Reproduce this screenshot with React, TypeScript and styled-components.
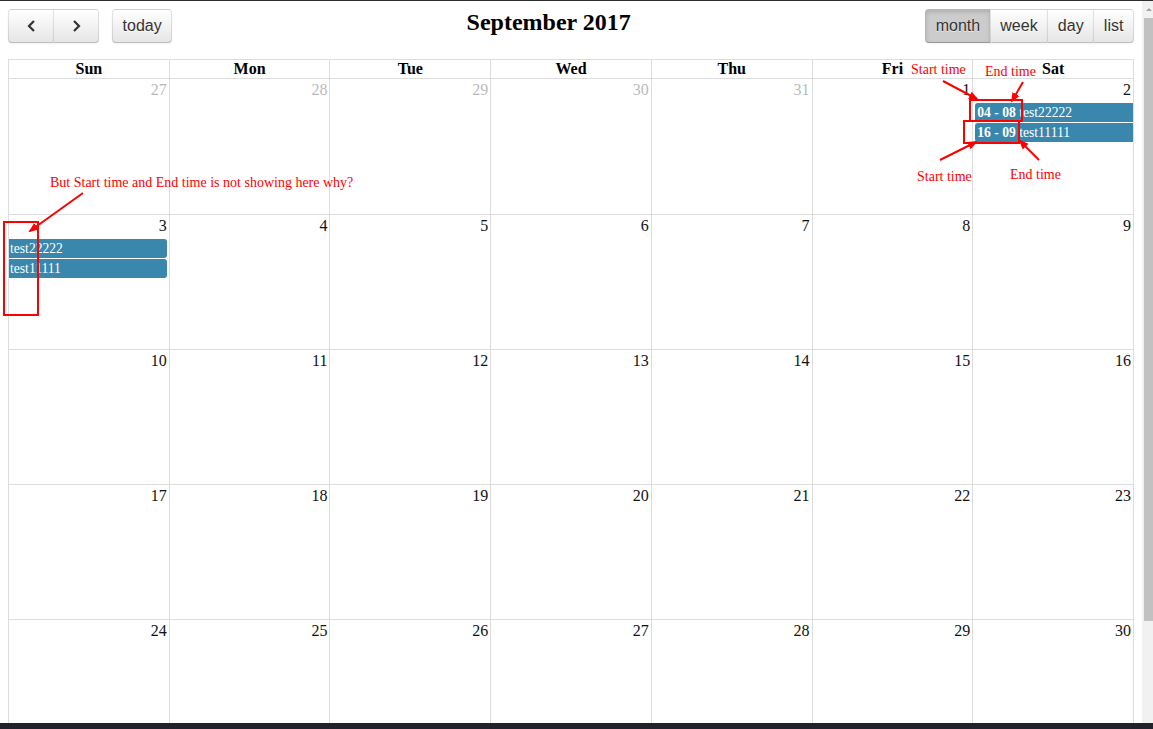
import React from 'react'
import styled, { createGlobalStyle, css } from 'styled-components'

const GlobalStyle = createGlobalStyle`
  html, body {
    margin: 0;
    padding: 0;
    height: 100%;
    overflow: hidden;
    background: #fff;
  }
  body {
    font-family: "Liberation Serif", "Times New Roman", serif;
    color: #000;
  }
  * {
    box-sizing: border-box;
  }
`

const Window = styled.div`
  position: relative;
  display: flex;
  flex-direction: column;
  width: 100vw;
  height: 100vh;
`

const TopEdge = styled.div`
  flex: none;
  height: 1px;
  background: #2e2e2e;
`

const Viewport = styled.div`
  flex: 1;
  display: flex;
  min-height: 0;
`

const Page = styled.div`
  flex: 1;
  min-width: 0;
  padding: 8px 8px 0;
  overflow: hidden;
`

const Scrollbar = styled.div`
  flex: none;
  width: 11px;
  background: #f1f1f1;
  display: flex;
  flex-direction: column;
  align-items: flex-end;
`

const ScrollArrow = styled.div`
  width: 9px;
  height: 17px;
  display: flex;
  align-items: center;
  justify-content: center;
  &::after {
    content: '';
    border-left: 3px solid transparent;
    border-right: 3px solid transparent;
    border-bottom: 3px solid #a3a3a3;
  }
`

const ScrollThumb = styled.div`
  width: 9px;
  height: 603px;
  background: #c1c1c1;
`

const BottomBar = styled.div`
  flex: none;
  height: 6px;
  background: #202428;
`

/* toolbar */

const Toolbar = styled.div`
  display: flex;
  align-items: flex-start;
  margin-bottom: 16px;
`

const ToolbarSide = styled.div`
  display: flex;
  gap: 13px;
`

const ToolbarCenter = styled.div`
  flex: 1;
  text-align: center;
`

const Title = styled.h2`
  margin: 0;
  font-size: 24px;
  font-weight: bold;
`

const ButtonGroup = styled.div`
  display: flex;
  & > button + button {
    margin-left: -1px;
  }
  & > button:not(:first-child) {
    border-top-left-radius: 0;
    border-bottom-left-radius: 0;
  }
  & > button:not(:last-child) {
    border-top-right-radius: 0;
    border-bottom-right-radius: 0;
  }
`

const Button = styled.button<{ $active?: boolean; $icon?: boolean }>`
  height: 33.6px;
  padding: 0 9.6px;
  display: flex;
  align-items: center;
  justify-content: center;
  font-family: "Liberation Sans", Arial, sans-serif;
  font-size: 16px;
  color: #333;
  text-shadow: 0 1px 1px rgba(255, 255, 255, 0.75);
  background-color: #f5f5f5;
  background-image: linear-gradient(to bottom, #fff, #e6e6e6);
  border: 1px solid;
  border-color: rgba(0, 0, 0, 0.1) rgba(0, 0, 0, 0.1) rgba(0, 0, 0, 0.25);
  border-radius: 4px;
  box-shadow: inset 0 1px 0 rgba(255, 255, 255, 0.2), 0 1px 2px rgba(0, 0, 0, 0.05);
  cursor: pointer;
  ${(p) =>
    p.$icon &&
    css`
      width: 46px;
      padding: 0;
    `}
  ${(p) =>
    p.$active &&
    css`
      background-color: #ccc;
      background-image: none;
      box-shadow: inset 0 2px 4px rgba(0, 0, 0, 0.15), 0 1px 2px rgba(0, 0, 0, 0.05);
    `}
`

function Chevron({ dir }: { dir: 'left' | 'right' }) {
  const points = dir === 'left' ? '7,1 2,6 7,11' : '2,1 7,6 2,11'
  return (
    <svg width="9" height="12" viewBox="0 0 9 12">
      <polyline points={points} fill="none" stroke="#333" strokeWidth="2.2" />
    </svg>
  )
}

/* month grid */

const Calendar = styled.div`
  border-left: 1px solid #ddd;
`

const HeadRow = styled.div`
  display: grid;
  grid-template-columns: repeat(7, 1fr);
  border-top: 1px solid #ddd;
  border-bottom: 1px solid #ddd;
`

const HeadCell = styled.div`
  border-right: 1px solid #ddd;
  text-align: center;
  font-weight: bold;
  font-size: 16px;
  line-height: 18px;
`

const Weeks = styled.div``

const WeekRow = styled.div`
  display: grid;
  grid-template-columns: repeat(7, 1fr);
  height: 135px;
  border-bottom: 1px solid #ddd;
  &:first-child {
    height: 136px;
  }
`

const DayCell = styled.div`
  min-width: 0;
  border-right: 1px solid #ddd;
`

const DayNumber = styled.div<{ $other?: boolean }>`
  height: 23px;
  padding: 2px 2px 0;
  text-align: right;
  font-size: 16px;
  line-height: 18px;
  color: #111;
  opacity: ${(p) => (p.$other ? 0.3 : 1)};
`

const Event = styled.div<{ $notStart?: boolean; $notEnd?: boolean }>`
  margin: 1px 2px 0;
  padding: 0 1px;
  background: #3a87ad;
  border: 1px solid #3a87ad;
  border-radius: 3px;
  color: #fff;
  font-size: 13.6px;
  line-height: 17px;
  white-space: nowrap;
  overflow: hidden;
  ${(p) =>
    p.$notStart &&
    css`
      margin-left: 0;
      border-left-width: 0;
      border-top-left-radius: 0;
      border-bottom-left-radius: 0;
    `}
  ${(p) =>
    p.$notEnd &&
    css`
      margin-right: 0;
      border-right-width: 0;
      border-top-right-radius: 0;
      border-bottom-right-radius: 0;
    `}
`

const EventTime = styled.span`
  font-weight: bold;
`

/* annotations drawn over the screenshot */

const Overlay = styled.svg`
  position: absolute;
  top: 0;
  left: 0;
  pointer-events: none;
`

const NoteText = styled.text`
  font-family: "Liberation Serif", "Times New Roman", serif;
  font-size: 14px;
  fill: #ff0000;
`

type CalEvent = { time?: string; title: string; notStart?: boolean; notEnd?: boolean }
type Day = { n: number; other?: boolean; events?: CalEvent[] }

const dayNames = ['Sun', 'Mon', 'Tue', 'Wed', 'Thu', 'Fri', 'Sat']

function buildWeeks(): Day[][] {
  const days: Day[] = [27, 28, 29, 30, 31].map((n) => ({ n, other: true }))
  for (let n = 1; n <= 30; n++) days.push({ n })
  days[6].events = [
    { time: '04 - 08', title: 'test22222', notEnd: true },
    { time: '16 - 09', title: 'test11111', notEnd: true },
  ]
  days[7].events = [
    { title: 'test22222', notStart: true },
    { title: 'test11111', notStart: true },
  ]
  const weeks: Day[][] = []
  for (let i = 0; i < days.length; i += 7) weeks.push(days.slice(i, i + 7))
  return weeks
}

const notes = [
  { x: 911, y: 74, text: 'Start time' },
  { x: 985, y: 76, text: 'End time' },
  { x: 917, y: 181, text: 'Start time' },
  { x: 1010, y: 179, text: 'End time' },
  { x: 50, y: 187, text: 'But Start time and End time is not showing here why?' },
]

const arrows = [
  [943, 81, 977, 99],
  [1023, 82, 1012, 101],
  [940, 160, 976, 142],
  [1039, 160, 1020, 141],
  [83, 193, 30, 231],
]

const boxes = [
  [970, 100, 52, 21],
  [964, 121, 55, 22],
  [4, 222, 34, 93],
]

function Annotations() {
  return (
    <Overlay width="1153" height="729" viewBox="0 0 1153 729">
      <defs>
        <marker
          id="head"
          markerUnits="userSpaceOnUse"
          markerWidth="10"
          markerHeight="10"
          refX="8"
          refY="5"
          orient="auto"
        >
          <path d="M0,1 L10,5 L0,9 Z" fill="#ff0000" />
        </marker>
      </defs>
      {boxes.map(([x, y, w, h], i) => (
        <rect key={i} x={x} y={y} width={w} height={h} fill="none" stroke="#ff0000" strokeWidth="2" />
      ))}
      {arrows.map(([x1, y1, x2, y2], i) => (
        <line
          key={i}
          x1={x1}
          y1={y1}
          x2={x2}
          y2={y2}
          stroke="#ff0000"
          strokeWidth="2"
          markerEnd="url(#head)"
        />
      ))}
      {notes.map((n, i) => (
        <NoteText key={i} x={n.x} y={n.y}>
          {n.text}
        </NoteText>
      ))}
    </Overlay>
  )
}

export default function App() {
  const weeks = buildWeeks()
  return (
    <Window>
      <GlobalStyle />
      <TopEdge />
      <Viewport>
        <Page>
          <Toolbar>
            <ToolbarSide>
              <ButtonGroup>
                <Button $icon>
                  <Chevron dir="left" />
                </Button>
                <Button $icon>
                  <Chevron dir="right" />
                </Button>
              </ButtonGroup>
              <Button>today</Button>
            </ToolbarSide>
            <ToolbarCenter>
              <Title>September 2017</Title>
            </ToolbarCenter>
            <ButtonGroup>
              <Button $active>month</Button>
              <Button>week</Button>
              <Button>day</Button>
              <Button>list</Button>
            </ButtonGroup>
          </Toolbar>

          <Calendar>
            <HeadRow>
              {dayNames.map((d) => (
                <HeadCell key={d}>{d}</HeadCell>
              ))}
            </HeadRow>
            <Weeks>
              {weeks.map((week, wi) => (
                <WeekRow key={wi}>
                  {week.map((day, di) => (
                    <DayCell key={di}>
                      <DayNumber $other={day.other}>{day.n}</DayNumber>
                      {day.events?.map((ev, ei) => (
                        <Event key={ei} $notStart={ev.notStart} $notEnd={ev.notEnd}>
                          {ev.time && <EventTime>{ev.time}</EventTime>}
                          {ev.time ? ' ' : ''}
                          {ev.title}
                        </Event>
                      ))}
                    </DayCell>
                  ))}
                </WeekRow>
              ))}
            </Weeks>
          </Calendar>
        </Page>
        <Scrollbar>
          <ScrollArrow />
          <ScrollThumb />
        </Scrollbar>
      </Viewport>
      <BottomBar />
      <Annotations />
    </Window>
  )
}
